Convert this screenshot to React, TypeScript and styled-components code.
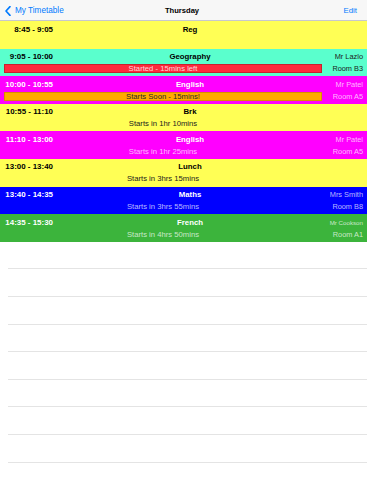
import React from "react";
import styled, { createGlobalStyle } from "styled-components";

const Global = createGlobalStyle`
  html, body { margin: 0; padding: 0; background: #ffffff; overflow: hidden; }
  body { font-family: "Liberation Sans", Arial, Helvetica, sans-serif; -webkit-font-smoothing: antialiased; }
  #root { width: 367px; height: 480px; overflow: hidden; }
`;

const Screen = styled.div`
  width: 367px;
  height: 480px;
  display: flex;
  flex-direction: column;
  background: #ffffff;
  overflow: hidden;
`;

const NavBar = styled.div`
  height: 21px;
  flex: none;
  box-sizing: border-box;
  background: #f7f7f7;
  border-bottom: 0.5px solid #c8c8cc;
  display: grid;
  grid-template-columns: 1fr auto 1fr;
  align-items: center;
  padding: 1.5px 10px 0 5px;
`;

const BackButton = styled.div`
  display: flex;
  align-items: center;
  gap: 4px;
  color: #007aff;
  font-size: 8.2px;
  line-height: 1;
  justify-self: start;
`;

const Title = styled.div`
  font-weight: bold;
  font-size: 7.6px;
  color: #000;
  line-height: 1;
  padding-left: 2px;
`;

const EditButton = styled.div`
  justify-self: end;
  color: #007aff;
  font-size: 7.8px;
  line-height: 1;
`;

type Tone = "dark" | "light";

const Row = styled.div<{ $bg: string }>`
  height: 27.6px;
  flex: none;
  background: ${(p) => p.$bg};
  display: flex;
  flex-direction: column;
`;

const TopLine = styled.div`
  height: 15.5px;
  display: grid;
  grid-template-columns: 57px 1fr 45px;
  align-items: center;
  padding-top: 0.5px;
  box-sizing: border-box;
`;

const Time = styled.div<{ $tone: Tone }>`
  text-align: right;
  padding-right: 4px;
  font-weight: bold;
  font-size: 7.95px;
  white-space: nowrap;
  color: ${(p) => (p.$tone === "light" ? "#ffffff" : "#000000")};
`;

const Subject = styled.div<{ $tone: Tone }>`
  text-align: center;
  font-weight: bold;
  font-size: 7.8px;
  white-space: nowrap;
  padding-left: 1px;
  color: ${(p) => (p.$tone === "light" ? "#ffffff" : "#000000")};
`;

const Teacher = styled.div<{ $tone: Tone; $size?: number }>`
  text-align: right;
  padding-right: 4px;
  font-size: ${(p) => p.$size ?? 7.4}px;
  white-space: nowrap;
  color: ${(p) => (p.$tone === "light" ? "rgba(255,255,255,0.72)" : "#1c1c1c")};
`;

const BottomLine = styled.div`
  height: 12.1px;
  display: grid;
  grid-template-columns: 1fr 45px;
  padding-left: 4px;
  box-sizing: border-box;
`;

type Bar = "none" | "red" | "orange";

const Status = styled.div<{ $tone: Tone; $bar: Bar }>`
  height: 9px;
  box-sizing: border-box;
  display: flex;
  align-items: center;
  justify-content: center;
  font-size: 7.7px;
  white-space: nowrap;
  background: ${(p) =>
    p.$bar === "red" ? "#ff2a3c" : p.$bar === "orange" ? "#ffab00" : "transparent"};
  border: 0.6px solid
    ${(p) =>
      p.$bar === "red" ? "#c9202e" : p.$bar === "orange" ? "#d98f00" : "transparent"};
  color: ${(p) =>
    p.$bar === "red"
      ? "rgba(255,255,255,0.82)"
      : p.$bar === "orange"
      ? "#2a2a2a"
      : p.$tone === "light"
      ? "rgba(255,255,255,0.72)"
      : "#1c1c1c"};
`;

const Room = styled.div<{ $tone: Tone }>`
  text-align: right;
  padding-right: 4px;
  font-size: 7.35px;
  white-space: nowrap;
  line-height: 12px;
  margin-top: -1px;
  color: ${(p) => (p.$tone === "light" ? "rgba(255,255,255,0.72)" : "#1c1c1c")};
`;

const EmptyRow = styled.div`
  height: 27.6px;
  flex: none;
  display: flex;
  align-items: flex-end;
  padding-left: 8px;
`;

const Separator = styled.div`
  flex: 1;
  height: 1px;
  background: #e4e4e4;
`;

type Lesson = {
  time: string;
  subject: string;
  teacher?: string;
  teacherSize?: number;
  status?: string;
  room?: string;
  bg: string;
  tone: Tone;
  bar?: Bar;
};

const lessons: Lesson[] = [
  { time: "8:45 - 9:05", subject: "Reg", bg: "#ffff55", tone: "dark" },
  {
    time: "9:05 - 10:00",
    subject: "Geography",
    teacher: "Mr Lazlo",
    status: "Started - 15mins left",
    room: "Room B3",
    bg: "#5affcd",
    tone: "dark",
    bar: "red",
  },
  {
    time: "10:00 - 10:55",
    subject: "English",
    teacher: "Mr Patel",
    status: "Starts Soon - 15mins!",
    room: "Room A5",
    bg: "#ff00ff",
    tone: "light",
    bar: "orange",
  },
  { time: "10:55 - 11:10", subject: "Brk", status: "Starts in 1hr 10mins", bg: "#ffff55", tone: "dark" },
  {
    time: "11:10 - 13:00",
    subject: "English",
    teacher: "Mr Patel",
    status: "Starts in 1hr 25mins",
    room: "Room A5",
    bg: "#ff00ff",
    tone: "light",
  },
  { time: "13:00 - 13:40", subject: "Lunch", status: "Starts in 3hrs 15mins", bg: "#ffff55", tone: "dark" },
  {
    time: "13:40 - 14:35",
    subject: "Maths",
    teacher: "Mrs Smith",
    status: "Starts in 3hrs 55mins",
    room: "Room B8",
    bg: "#0000ff",
    tone: "light",
  },
  {
    time: "14:35 - 15:30",
    subject: "French",
    teacher: "Mr Cookson",
    teacherSize: 6.2,
    status: "Starts in 4hrs 50mins",
    room: "Room A1",
    bg: "#3cb43c",
    tone: "light",
  },
];

const Chevron = () => (
  <svg width="6" height="10" viewBox="0 0 6 10" fill="none">
    <polyline points="5,0.6 1,5 5,9.4" stroke="#007aff" strokeWidth="1.6" strokeLinecap="round" strokeLinejoin="round" />
  </svg>
);

export default function App() {
  return (
    <Screen>
      <Global />
      <NavBar>
        <BackButton>
          <Chevron />
          <span>My Timetable</span>
        </BackButton>
        <Title>Thursday</Title>
        <EditButton>Edit</EditButton>
      </NavBar>
      {lessons.map((l, i) => (
        <Row key={i} $bg={l.bg}>
          <TopLine>
            <Time $tone={l.tone}>{l.time}</Time>
            <Subject $tone={l.tone}>{l.subject}</Subject>
            <Teacher $tone={l.tone} $size={l.teacherSize}>
              {l.teacher ?? ""}
            </Teacher>
          </TopLine>
          <BottomLine>
            <Status $tone={l.tone} $bar={l.bar ?? "none"}>
              {l.status ?? ""}
            </Status>
            <Room $tone={l.tone}>{l.room ?? ""}</Room>
          </BottomLine>
        </Row>
      ))}
      {Array.from({ length: 9 }).map((_, i) => (
        <EmptyRow key={i}>
          <Separator />
        </EmptyRow>
      ))}
    </Screen>
  );
}
